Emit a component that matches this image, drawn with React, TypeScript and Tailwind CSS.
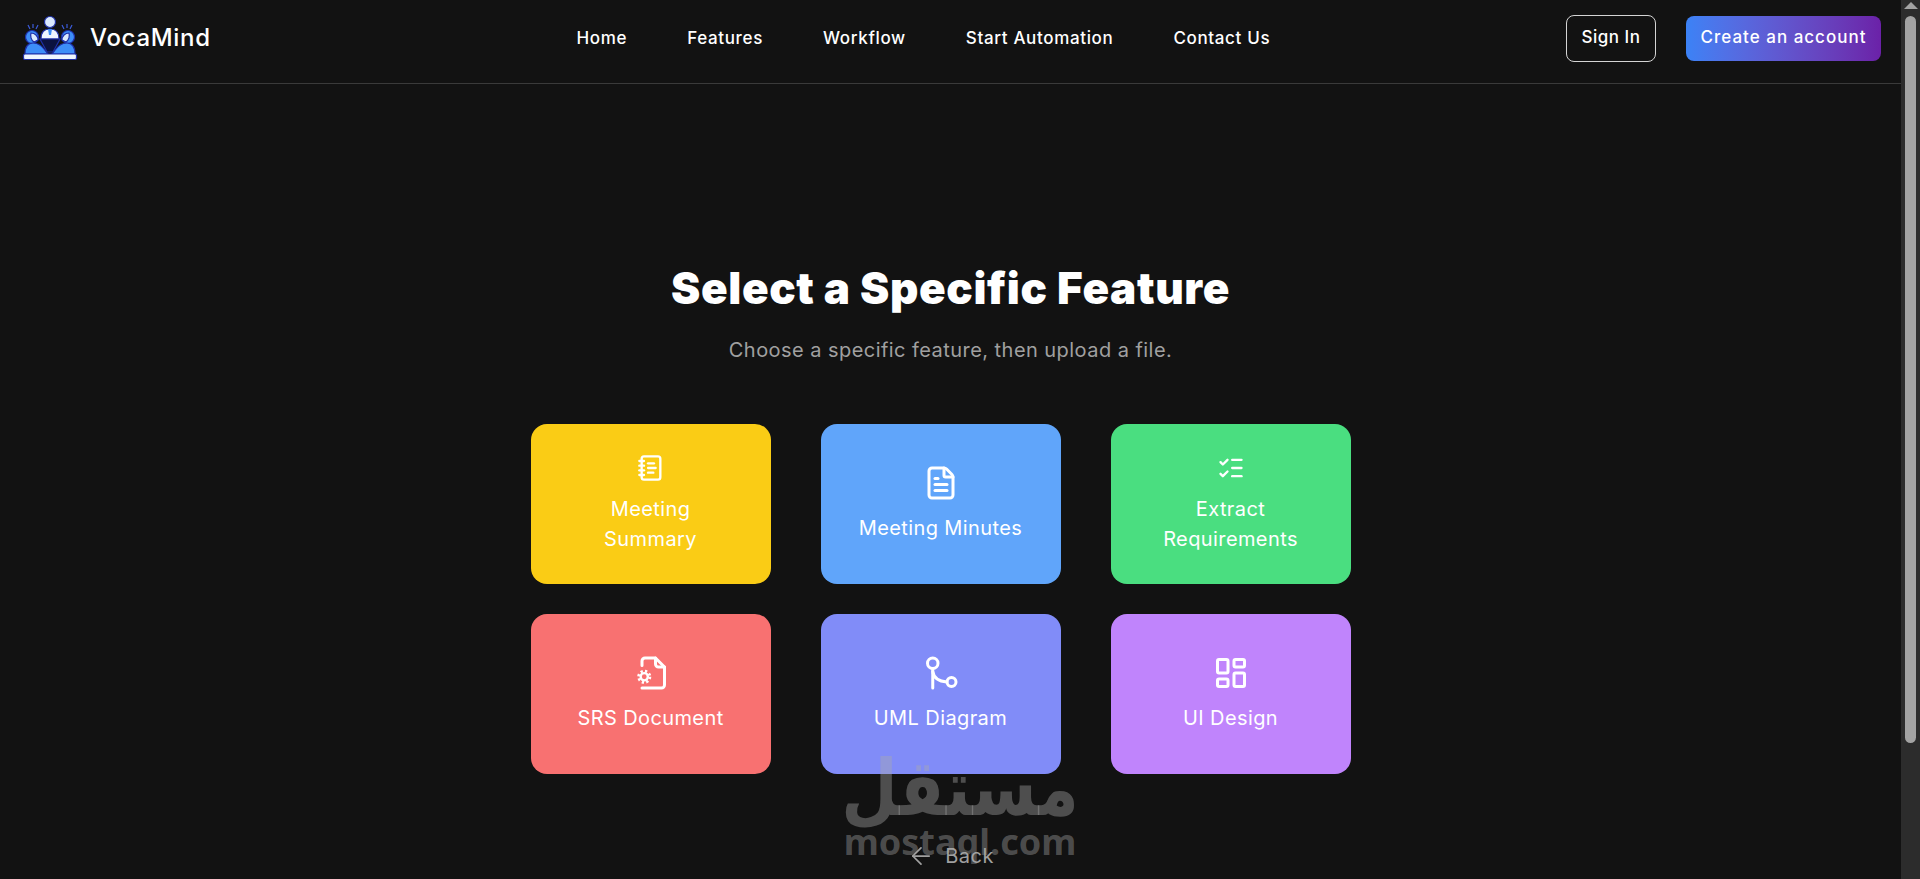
import { ArrowLeft, FileText, LayoutDashboard, ListChecks, NotebookText } from "lucide-react";
import type { ReactNode } from "react";

const NAV_ITEMS = ["Home", "Features", "Workflow", "Start Automation", "Contact Us"];

function UmlIcon({ className }: { className?: string }) {
  return (
    <svg viewBox="0 0 24 24" fill="none" stroke="currentColor" strokeWidth="2" strokeLinecap="round" strokeLinejoin="round" className={className}>
      <circle cx="6.5" cy="5.5" r="3.5" />
      <circle cx="19" cy="18" r="3" />
      <path d="M6.5 9v13" />
      <path d="M6.5 11c.5 3.5 3 6.5 9.5 7" />
    </svg>
  );
}

function SrsIcon({ className }: { className?: string }) {
  return (
    <svg viewBox="0 0 24 24" fill="none" stroke="currentColor" strokeWidth="2" strokeLinecap="round" strokeLinejoin="round" className={className}>
      <path d="M6 7V4a2 2 0 0 1 2-2h7l6 6v12a2 2 0 0 1-2 2H6" />
      <path d="M15 2v4a2 2 0 0 0 2 2h4" />
      <circle cx="7.5" cy="14.5" r="2.4" strokeWidth="1.6" />
      <circle cx="7.5" cy="14.5" r="3.8" strokeWidth="1.8" strokeLinecap="butt" strokeDasharray="1.5 1.49" />
    </svg>
  );
}

function Logo() {
  return (
    <svg viewBox="0 0 56 46" className="h-[46px] w-[56px]">
      <g stroke="#1e2fa8" strokeWidth="1.2">
        <path d="M6 10l2 4M11 9v4M16 10l-2 4M40 10l2 4M45 9v4M50 10l-2 4" fill="none" stroke="#3b5bd9" />
        <path d="M19 24c0-8 4-10 9-10s9 2 9 10z" fill="#eff6ff" />
        <path d="M26 14h4l-1 6h-2z" fill="#3d8ef8" stroke="none" />
        <circle cx="28" cy="7" r="5.5" fill="#dbeafe" />
        <circle cx="10" cy="22" r="6.5" fill="#3d8ef8" />
        <circle cx="46" cy="22" r="6.5" fill="#3d8ef8" />
        <path d="M9 18c4 0 7 3 7 7l-4 2c-3-2-4-6-3-9zM47 18c-4 0-7 3-7 7l4 2c3-2 4-6 3-9z" fill="#dbeafe" />
        <path d="M3 39c0-7 3-11 8-11 4 0 8 2 11 6l4 5z" fill="#3d8ef8" />
        <path d="M53 39c0-7-3-11-8-11-4 0-8 2-11 6l-4 5z" fill="#3d8ef8" />
        <path d="M18 24h20l-7 13h-6z" fill="#0b1240" />
        <rect x="1.5" y="39" width="53" height="5.5" rx="1.5" fill="#eff6ff" />
      </g>
    </svg>
  );
}

function FeatureCard({ color, icon, children }: { color: string; icon: ReactNode; children: ReactNode }) {
  return (
    <div className={`flex h-[160px] w-[240px] flex-col items-center justify-center rounded-2xl text-center text-[20px] leading-[30px] tracking-[0.4px] text-white ${color}`}>
      <div className="mb-[12px]">{icon}</div>
      <div>{children}</div>
    </div>
  );
}

export default function App() {
  return (
    <div className="relative flex h-[879px] overflow-hidden bg-[#121212] font-['Inter',sans-serif] text-white">
      <div className="relative flex min-w-0 flex-1 flex-col">
        <header className="flex h-[84px] shrink-0 items-center justify-between border-b border-[#3a3a3a] pb-[7px] pl-[22px] pr-[20px]">
          <div className="flex items-center gap-3">
            <Logo />
            <span className="text-[24px] font-medium tracking-[0.7px]">VocaMind</span>
          </div>
          <nav className="ml-[70px] mt-[2px] flex items-center gap-[60px] text-[17px] font-medium tracking-[0.65px]">
            {NAV_ITEMS.map((item) => (
              <a key={item}>{item}</a>
            ))}
          </nav>
          <div className="flex items-center gap-[30px] text-[17px] font-medium">
            <button className="h-[47px] w-[90px] rounded-lg border border-[#d4d4d4] tracking-[0.5px]">Sign In</button>
            <button className="h-[45px] w-[195px] rounded-lg bg-gradient-to-r from-[#3b82f6] to-[#6b21a8] tracking-[1px]">Create an account</button>
          </div>
        </header>

        <main className="flex flex-col items-center pt-[178px]">
          <h1 className="text-[44px] font-black leading-[52px] tracking-[0.6px]">Select a Specific Feature</h1>
          <p className="mt-[22px] text-[20px] leading-[28px] tracking-[0.45px] text-[#a0a0a0]">Choose a specific feature, then upload a file.</p>

          <div className="mr-[20px] mt-[60px] grid grid-cols-3 gap-x-[50px] gap-y-[30px]">
            <FeatureCard color="bg-[#facc15]" icon={<NotebookText className="size-7" />}>
              Meeting<br />Summary
            </FeatureCard>
            <FeatureCard color="bg-[#60a5fa]" icon={<FileText className="size-9" />}>
              Meeting Minutes
            </FeatureCard>
            <FeatureCard color="bg-[#4ade80]" icon={<ListChecks className="size-7" />}>
              Extract<br />Requirements
            </FeatureCard>
            <FeatureCard color="bg-[#f87171]" icon={<SrsIcon className="size-9" />}>
              SRS Document
            </FeatureCard>
            <FeatureCard color="bg-[#818cf8]" icon={<UmlIcon className="size-9" />}>
              UML Diagram
            </FeatureCard>
            <FeatureCard color="bg-[#c084fc]" icon={<LayoutDashboard className="size-9" />}>
              UI Design
            </FeatureCard>
          </div>

          <a className="mt-[67px] flex items-center gap-[10px] text-[20px] tracking-[0.5px] text-[#a0a0a0]">
            <ArrowLeft className="size-7" strokeWidth={1.5} />
            Back
          </a>
        </main>

        {/* watermark */}
        <div className="pointer-events-none absolute left-[845px] top-[762px] flex w-[230px] flex-col items-center text-[#aaaaaa]/40">
          <span dir="rtl" className="origin-bottom scale-y-[1.2] font-['DejaVu_Sans',sans-serif] text-[65px] font-bold leading-[66px]">مستقل</span>
          <span className="-mt-[4px] font-['Noto_Sans',sans-serif] text-[36px] font-bold leading-[36px]">mostaql.com</span>
        </div>
      </div>

      {/* window scrollbar */}
      <div className="flex w-[19px] shrink-0 flex-col items-center bg-[#2c2c2c]">
        <div className="mt-[2px] h-0 w-0 border-x-[7px] border-b-[7px] border-x-transparent border-b-[#a3a3a3]" />
        <div className="mt-[7px] h-[727px] w-[11px] rounded-full bg-[#a3a3a3]" />
      </div>
    </div>
  );
}
